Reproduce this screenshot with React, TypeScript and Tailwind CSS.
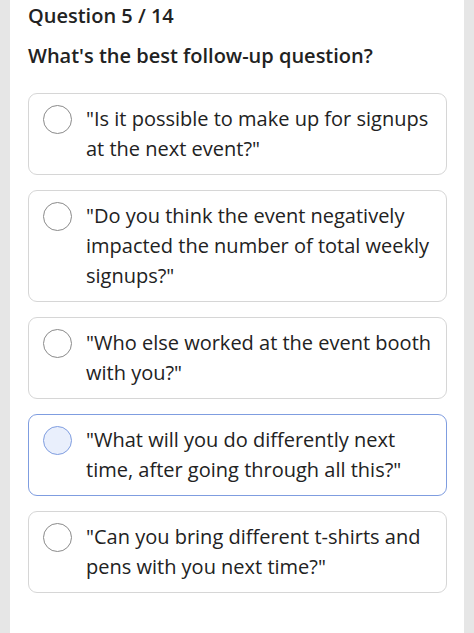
const options = [
  { text: '"Is it possible to make up for signups at the next event?"', selected: false },
  { text: '"Do you think the event negatively impacted the number of total weekly signups?"', selected: false },
  { text: '"Who else worked at the event booth with you?"', selected: false },
  { text: '"What will you do differently next time, after going through all this?"', selected: true },
  { text: '"Can you bring different t-shirts and pens with you next time?"', selected: false },
]

function Option({ text, selected }: { text: string; selected: boolean }) {
  return (
    <div
      className={
        selected
          ? "flex items-start gap-[14px] rounded-[9px] border border-[#7f9de0] bg-white px-[14px] py-[10px]"
          : "flex items-start gap-[14px] rounded-[9px] border border-[#d6d6d6] bg-white px-[14px] py-[10px]"
      }
    >
      <div className="flex h-[30px] shrink-0 items-center">
        <div
          className={
            selected
              ? "h-[29px] w-[29px] rounded-full border-[1.5px] border-[#7f9de0] bg-[#e9effc]"
              : "h-[29px] w-[29px] rounded-full border-[1.5px] border-[#8a8a8a] bg-white"
          }
        />
      </div>
      <p className="text-[20px] leading-[30px] text-[#222]">{text}</p>
    </div>
  )
}

export default function App() {
  return (
    <div className="flex min-h-[633px] bg-[#e6e6e6] px-[10px] font-['Open_Sans',sans-serif]">
      <div className="flex-1 bg-white pl-[18px] pr-[17px]">
        <h2 className="pt-[2px] text-[20px] font-semibold leading-[28px] text-[#222]">Question 5 / 14</h2>
        <h1 className="mt-[12px] text-[20px] font-semibold leading-[28px] text-[#222]">
          What's the best follow-up question?
        </h1>
        <div className="mt-[23px] flex flex-col gap-[15px]">
          {options.map((o) => (
            <Option key={o.text} text={o.text} selected={o.selected} />
          ))}
        </div>
      </div>
    </div>
  )
}
